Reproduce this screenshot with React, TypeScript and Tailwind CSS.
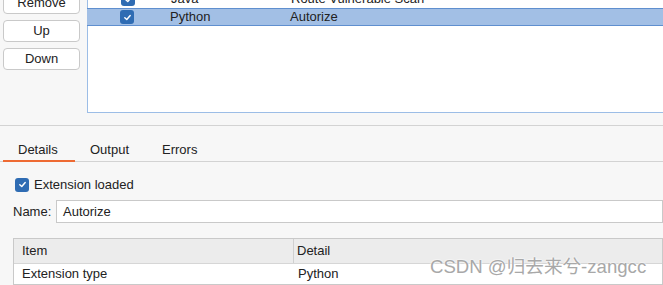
import React from "react";

function Check({ size = 14 }: { size?: number }) {
  return (
    <div
      className="flex items-center justify-center rounded-[3px] bg-[#2f6cb3]"
      style={{ width: size, height: size }}
    >
      <svg width="9" height="9" viewBox="0 0 10 10">
        <path d="M2 5.2 L4.2 7.3 L8 2.8" stroke="white" strokeWidth="1.6" fill="none" strokeLinecap="round" strokeLinejoin="round" />
      </svg>
    </div>
  );
}

function Btn({ label }: { label: string }) {
  return (
    <div className="h-[22px] w-[77px] rounded-[4px] border border-[#c9c9c9] bg-white flex items-center justify-center text-[13px] text-[#222]">
      {label}
    </div>
  );
}

export default function App() {
  return (
    <div
      className="relative w-[663px] h-[285px] overflow-hidden bg-[#f7f7f7] text-[13px] text-[#222]"
      style={{ fontFamily: '"Liberation Sans", Arial, sans-serif' }}
    >
      {/* top section */}
      <div className="flex h-[113px]">
        <div className="w-[87px] shrink-0 flex flex-col gap-[6px] pl-[3px] -mt-[8px]">
          <Btn label="Remove" />
          <Btn label="Up" />
          <Btn label="Down" />
        </div>
        <div className="flex-1 bg-white border-l border-b border-[#9cbde6] flex flex-col -mt-[10px]">
          <div className="flex items-center h-[18px]">
            <div className="w-[33px]" />
            <Check />
            <div className="w-[36px]" />
            <div className="w-[120px]">Java</div>
            <div>Route Vulnerable Scan</div>
          </div>
          <div className="flex items-center h-[18px] bg-[#a2bfe5] border-y border-[#5f8fcf] -ml-px pl-px">
            <div className="w-[32px]" />
            <Check />
            <div className="w-[36px]" />
            <div className="w-[120px]">Python</div>
            <div>Autorize</div>
          </div>
        </div>
      </div>

      {/* tabs */}
      <div className="mt-[12px] border-t border-[#d3d3d3]">
        <div className="flex h-[36px] items-stretch border-b border-[#d3d3d3] pl-[3px]">
          <div className="w-[72px] flex items-end pb-[1px] pl-[15px] border-b-2 border-[#ee6a33] -mb-px">Details</div>
          <div className="w-[72px] flex items-end pb-[2px] pl-[15px]">Output</div>
          <div className="flex items-end pb-[2px] pl-[15px]">Errors</div>
        </div>
      </div>

      {/* details */}
      <div className="flex items-center gap-[5px] pl-[15px] mt-[15px] h-[15px]">
        <Check />
        <span>Extension loaded</span>
      </div>
      <div className="flex items-center mt-[8px] h-[23px]">
        <span className="pl-[13px] w-[56px]">Name:</span>
        <div className="flex-1 h-[23px] bg-white border border-[#c9c9c9] flex items-center pl-[6px]">Autorize</div>
      </div>

      <div className="mt-[15px] ml-[13px] border border-[#c9c9c9] bg-white">
        <div className="flex h-[25px] bg-[#ececec] border-b border-[#d6d6d6]">
          <div className="w-[280px] flex items-center pl-[8px] border-r border-[#d0d0d0]">Item</div>
          <div className="flex-1 flex items-center pl-[3px]">Detail</div>
        </div>
        <div className="flex h-[20px] items-center">
          <div className="w-[280px] pl-[8px]">Extension type</div>
          <div className="pl-[4px]">Python</div>
        </div>
      </div>

      <div
        className="absolute left-[430px] top-[253px] text-[18.6px] text-[#a8a8a8] whitespace-nowrap"
        style={{ fontFamily: '"Liberation Sans", "Noto Sans CJK SC", sans-serif', textShadow: "0 0 2px #fff, 0 0 2px #fff" }}
      >
        CSDN @归去来兮-zangcc
      </div>
    </div>
  );
}
